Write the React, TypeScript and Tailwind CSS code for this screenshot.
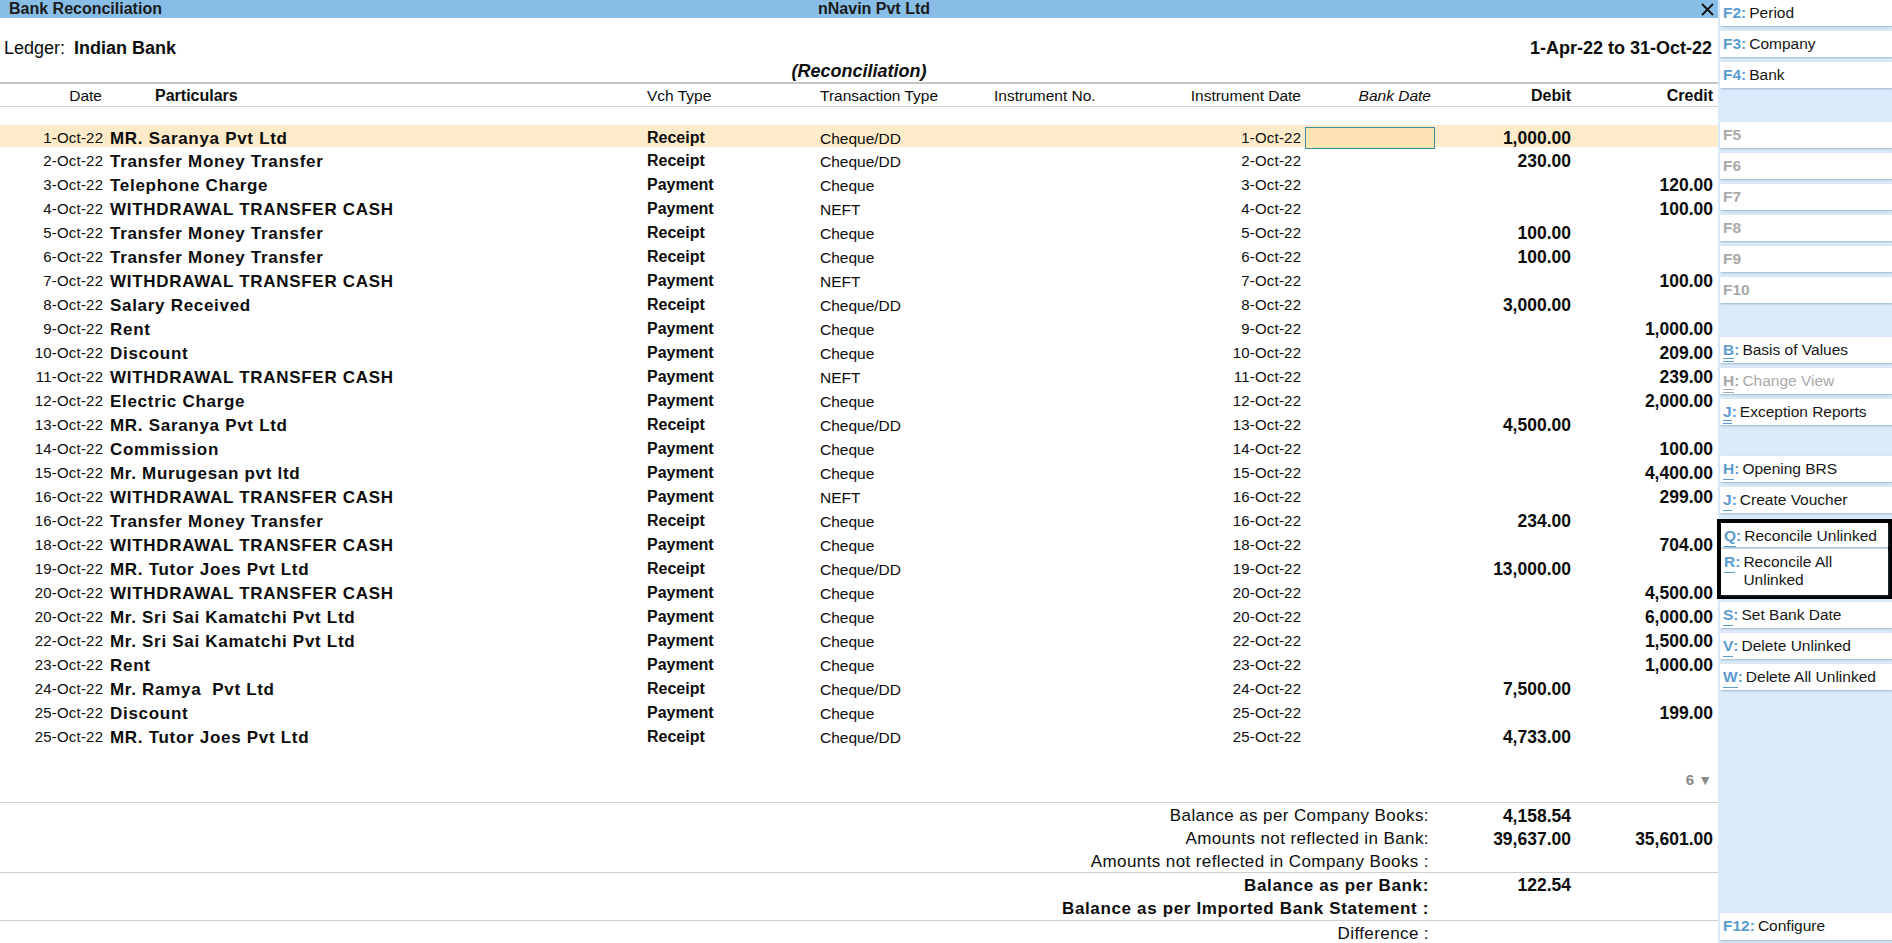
import React from "react";

const cols =
  "grid grid-cols-[103px_544px_173px_174px_156px_151px_136px_134px_142px]";

type Row = [string, string, string, string, string, string];

// date, particulars, vch type, transaction type, debit, credit
const rows: Row[] = [
  ["1-Oct-22", "MR. Saranya Pvt Ltd", "Receipt", "Cheque/DD", "1,000.00", ""],
  ["2-Oct-22", "Transfer Money Transfer", "Receipt", "Cheque/DD", "230.00", ""],
  ["3-Oct-22", "Telephone Charge", "Payment", "Cheque", "", "120.00"],
  ["4-Oct-22", "WITHDRAWAL TRANSFER CASH", "Payment", "NEFT", "", "100.00"],
  ["5-Oct-22", "Transfer Money Transfer", "Receipt", "Cheque", "100.00", ""],
  ["6-Oct-22", "Transfer Money Transfer", "Receipt", "Cheque", "100.00", ""],
  ["7-Oct-22", "WITHDRAWAL TRANSFER CASH", "Payment", "NEFT", "", "100.00"],
  ["8-Oct-22", "Salary Received", "Receipt", "Cheque/DD", "3,000.00", ""],
  ["9-Oct-22", "Rent", "Payment", "Cheque", "", "1,000.00"],
  ["10-Oct-22", "Discount", "Payment", "Cheque", "", "209.00"],
  ["11-Oct-22", "WITHDRAWAL TRANSFER CASH", "Payment", "NEFT", "", "239.00"],
  ["12-Oct-22", "Electric Charge", "Payment", "Cheque", "", "2,000.00"],
  ["13-Oct-22", "MR. Saranya Pvt Ltd", "Receipt", "Cheque/DD", "4,500.00", ""],
  ["14-Oct-22", "Commission", "Payment", "Cheque", "", "100.00"],
  ["15-Oct-22", "Mr. Murugesan pvt ltd", "Payment", "Cheque", "", "4,400.00"],
  ["16-Oct-22", "WITHDRAWAL TRANSFER CASH", "Payment", "NEFT", "", "299.00"],
  ["16-Oct-22", "Transfer Money Transfer", "Receipt", "Cheque", "234.00", ""],
  ["18-Oct-22", "WITHDRAWAL TRANSFER CASH", "Payment", "Cheque", "", "704.00"],
  ["19-Oct-22", "MR. Tutor Joes Pvt Ltd", "Receipt", "Cheque/DD", "13,000.00", ""],
  ["20-Oct-22", "WITHDRAWAL TRANSFER CASH", "Payment", "Cheque", "", "4,500.00"],
  ["20-Oct-22", "Mr. Sri Sai Kamatchi Pvt Ltd", "Payment", "Cheque", "", "6,000.00"],
  ["22-Oct-22", "Mr. Sri Sai Kamatchi Pvt Ltd", "Payment", "Cheque", "", "1,500.00"],
  ["23-Oct-22", "Rent", "Payment", "Cheque", "", "1,000.00"],
  ["24-Oct-22", "Mr. Ramya  Pvt Ltd", "Receipt", "Cheque/DD", "7,500.00", ""],
  ["25-Oct-22", "Discount", "Payment", "Cheque", "", "199.00"],
  ["25-Oct-22", "MR. Tutor Joes Pvt Ltd", "Receipt", "Cheque/DD", "4,733.00", ""],
];

const amount = "text-right text-[17.5px] font-bold";

function EntryRow({ r, active }: { r: Row; active?: boolean }) {
  return (
    <div
      className={`${cols} h-[24px] items-center ${
        active ? "bg-[#fdebc9] bg-clip-content py-[1px]" : ""
      }`}
    >
      <span className="text-right text-[15px] tracking-[0.2px] mr-[-0.2px]">{r[0]}</span>
      <span className="pl-[7px] text-[17px] font-bold tracking-[0.7px] whitespace-pre">
        {r[1]}
      </span>
      <span className="text-[16px] font-bold">{r[2]}</span>
      <span className="text-[15.5px]">{r[3]}</span>
      <span />
      <span className="text-right text-[15px] tracking-[0.2px] mr-[-0.2px]">{r[0]}</span>
      <span className="flex">
        {active && (
          <span className="ml-[4px] h-[22px] w-[130px] border border-[#3f8e9c] bg-[#fde4b3]" />
        )}
      </span>
      <span className={amount}>{r[4]}</span>
      <span className={amount}>{r[5]}</span>
    </div>
  );
}

function FooterRow({
  label,
  bold,
  debit,
  credit,
  h = "h-[23px]",
}: {
  label: string;
  bold?: boolean;
  debit?: string;
  credit?: string;
  h?: string;
}) {
  return (
    <div className={`${cols} ${h} items-center`}>
      <span
        className={`col-span-7 text-right pr-[8px] text-[17px] ${
          bold ? "font-bold tracking-[0.65px]" : "tracking-[0.4px]"
        }`}
      >
        {label}
      </span>
      <span className={amount}>{debit}</span>
      <span className={amount}>{credit}</span>
    </div>
  );
}

function Key({
  k,
  label,
  dis,
  ul = 0,
  className = "",
}: {
  k: string;
  label?: React.ReactNode;
  dis?: boolean;
  ul?: 0 | 1 | 2;
  className?: string;
}) {
  const keyColor = dis ? "text-[#a9a9a9]" : "text-[#5b9bd0]";
  return (
    <div
      className={`flex items-center bg-white pl-[3px] text-[15.5px] leading-[18px] shadow-[1px_1px_2px_rgba(80,115,150,0.45)] ${className}`}
    >
      <span className={`self-start pt-[4px] font-bold ${keyColor}`}>
        <span className="relative">
          {k}
          {ul === 2 && (
            <span className="absolute left-0 right-0 top-full h-[4px] border-y border-current" />
          )}
          {ul === 1 && (
            <span className="absolute left-0 right-0 top-full mt-[2px] border-b border-current" />
          )}
        </span>
        {label ? ":" : ""}
      </span>
      {label && (
        <span
          className={`self-start pt-[4px] ml-[3px] ${
            dis ? "text-[#a9a9a9]" : "text-[#161616]"
          }`}
        >
          {label}
        </span>
      )}
    </div>
  );
}

export default function App() {
  return (
    <div className="flex h-[943px] w-[1892px] overflow-hidden bg-white font-['Liberation_Sans',Arial,sans-serif] text-[#0d0d0d]">
      {/* report */}
      <main className="flex w-[1718px] flex-col">
        {/* title bar */}
        <div className="flex h-[18px] items-center bg-[#88bde6] text-[16px] font-bold leading-[18px] text-[#1b1b1b]">
          <span className="w-[818px] pl-[9px]">Bank Reconciliation</span>
          <span>nNavin Pvt Ltd</span>
          <span className="flex flex-1 justify-end pr-[4px]">
            <svg width="13" height="13" viewBox="0 0 13 13">
              <path d="M1 1 L12 12 M12 1 L1 12" stroke="#111" strokeWidth="1.8" />
            </svg>
          </span>
        </div>

        {/* ledger line */}
        <div className="mt-[18px] flex h-[24px] items-center justify-between pl-[4px] pr-[6px] text-[18px]">
          <span>
            Ledger:<span className="ml-[9px] font-bold">Indian Bank</span>
          </span>
          <span className="font-bold">1-Apr-22 to 31-Oct-22</span>
        </div>
        <div className="flex h-[22px] items-center justify-center text-[18px] font-bold italic">
          (Reconciliation)
        </div>
        <div className="h-[2px] bg-[#c6c6c6]" />

        {/* column header */}
        <div className={`${cols} h-[22px] items-center text-[15.5px]`}>
          <span className="text-right pr-[1px]">Date</span>
          <span className="pl-[52px] text-[16px] font-bold">Particulars</span>
          <span>Vch Type</span>
          <span>Transaction Type</span>
          <span>Instrument No.</span>
          <span className="text-right">Instrument Date</span>
          <span className="text-right pr-[6px] italic">Bank Date</span>
          <span className="text-right text-[16px] font-bold">Debit</span>
          <span className="text-right text-[16px] font-bold">Credit</span>
        </div>
        <div className="h-[1px] bg-[#d3d3d3]" />

        {/* entries */}
        <div className="mt-[18px] flex flex-col">
          {rows.map((r, i) => (
            <EntryRow key={i} r={r} active={i === 0} />
          ))}
        </div>

        {/* page indicator */}
        <div className="mt-[21px] flex h-[24px] items-center justify-end gap-[4px] pr-[6px] font-bold text-[#8a8a8a]">
          <span className="text-[15px]">6</span>
          <span className="text-[14px]">▼</span>
        </div>

        {/* totals */}
        <div className="mt-[10px] h-[1px] bg-[#cfcfcf]" />
        <FooterRow label="Balance as per Company Books:" debit="4,158.54" />
        <FooterRow
          label="Amounts not reflected in Bank:"
          debit="39,637.00"
          credit="35,601.00"
        />
        <FooterRow label="Amounts not reflected in Company Books :" />
        <div className="h-[1px] bg-[#cfcfcf]" />
        <FooterRow label="Balance as per Bank:" bold debit="122.54" h="h-[24px]" />
        <FooterRow label="Balance as per Imported Bank Statement :" bold h="h-[24px]" />
        <div className="h-[1px] bg-[#cfcfcf]" />
        <FooterRow label="Difference :" h="h-[22px]" />
      </main>

      {/* button bar */}
      <aside className="flex flex-1 flex-col bg-[#dcebf9]">
        <Key k="F2" label="Period" className="ml-[2px] h-[26px]" />
        <Key k="F3" label="Company" className="ml-[2px] mt-[5px] h-[26px]" />
        <Key k="F4" label="Bank" className="ml-[2px] mt-[5px] h-[26px]" />

        <Key k="F5" dis className="ml-[2px] mt-[34px] h-[26px]" />
        <Key k="F6" dis className="ml-[2px] mt-[5px] h-[26px]" />
        <Key k="F7" dis className="ml-[2px] mt-[5px] h-[26px]" />
        <Key k="F8" dis className="ml-[2px] mt-[5px] h-[26px]" />
        <Key k="F9" dis className="ml-[2px] mt-[5px] h-[26px]" />
        <Key k="F10" dis className="ml-[2px] mt-[5px] h-[26px]" />

        <Key k="B" ul={2} label="Basis of Values" className="ml-[2px] mt-[34px] h-[26px]" />
        <Key k="H" ul={2} dis label="Change View" className="ml-[2px] mt-[5px] h-[26px]" />
        <Key k="J" ul={2} label="Exception Reports" className="ml-[2px] mt-[5px] h-[26px]" />

        <Key k="H" ul={1} label="Opening BRS" className="ml-[2px] mt-[31px] h-[26px]" />
        <Key k="J" ul={1} label="Create Voucher" className="ml-[2px] mt-[5px] h-[26px]" />

        <div className="ml-[-1px] mt-[6px] flex flex-col border-[4px] border-black">
          <Key k="Q" ul={1} label="Reconcile Unlinked" className="h-[24px]" />
          <Key
            k="R"
            ul={1}
            label={
              <>
                Reconcile All
                <br />
                Unlinked
              </>
            }
            className="mt-[2px] h-[46px]"
          />
        </div>

        <Key k="S" ul={1} label="Set Bank Date" className="ml-[2px] mt-[3px] h-[26px]" />
        <Key k="V" ul={1} label="Delete Unlinked" className="ml-[2px] mt-[5px] h-[26px]" />
        <Key k="W" ul={1} label="Delete All Unlinked" className="ml-[2px] mt-[5px] h-[26px]" />

        <Key k="F12" label="Configure" className="ml-[2px] mb-[3px] mt-auto h-[27px]" />
      </aside>
    </div>
  );
}
